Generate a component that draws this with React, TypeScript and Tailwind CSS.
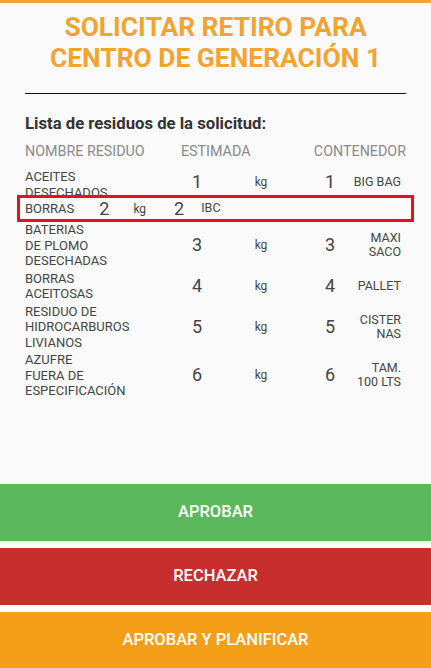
import React from "react";

type Row = {
  name: string[];
  est: string;
  num: string;
  cont: string[];
};

const rows: Row[] = [
  { name: ["BATERIAS", "DE PLOMO", "DESECHADAS"], est: "3", num: "3", cont: ["MAXI", "SACO"] },
  { name: ["BORRAS", "ACEITOSAS"], est: "4", num: "4", cont: ["PALLET"] },
  { name: ["RESIDUO DE", "HIDROCARBUROS", "LIVIANOS"], est: "5", num: "5", cont: ["CISTER", "NAS"] },
  { name: ["AZUFRE", "FUERA DE", "ESPECIFICACIÓN"], est: "6", num: "6", cont: ["TAM.", "100 LTS"] },
];

function TableRow({ r, clip }: { r: Row; clip?: boolean }) {
  return (
    <div className="flex items-center">
      <div
        className={`w-[140px] text-[13px] leading-[15.5px] text-[#444] ${clip ? "h-[26px] overflow-hidden" : ""}`}
      >
        {r.name.map((n) => (
          <div key={n}>{n}</div>
        ))}
      </div>
      <div className="w-[64px] text-center text-[18px] leading-[22px] text-[#444]">{r.est}</div>
      <div className="w-[64px] text-center text-[12px] text-[#444]">kg</div>
      <div className="w-[60px] pl-[14px] text-center text-[18px] leading-[22px] text-[#444]">{r.num}</div>
      <div className="flex-1 pr-[5px] text-right text-[12.5px] leading-[14px] text-[#444]">
        {r.cont.map((c) => (
          <div key={c} className="whitespace-nowrap">
            {c}
          </div>
        ))}
      </div>
    </div>
  );
}

export default function App() {
  return (
    <div
      className="flex h-[668px] w-full flex-col bg-[#fafafa]"
      style={{ fontFamily: "Roboto, 'Noto Sans', sans-serif" }}
    >
      <div className="h-[3px] w-full bg-[#f2a332]" />
      <div className="px-[25px]">
        <h1 className="pt-[8.5px] text-center text-[26.4px] font-bold leading-[31px] text-[#f2a332]">
          SOLICITAR RETIRO PARA
          <br />
          CENTRO DE GENERACIÓN 1
        </h1>
        <div className="mt-[19.5px] h-px w-full bg-[#111]" />
        <div className="mt-[20px] text-[16.7px] font-bold leading-[20px] text-[#333]">
          Lista de residuos de la solicitud:
        </div>
        <div className="mt-[8px] flex text-[14.3px] leading-[18px] text-[#8a8a8a]">
          <div className="w-[156px]">NOMBRE RESIDUO</div>
          <div className="w-[133px]">ESTIMADA</div>
          <div className="flex-1 text-right">CONTENEDOR</div>
        </div>
      </div>
      <div className="mt-[9px] px-[25px]">
        <TableRow clip r={{ name: ["ACEITES", "DESECHADOS"], est: "1", num: "1", cont: ["BIG BAG"] }} />
      </div>
      <div className="mx-[17px] flex h-[27px] items-center border-[3px] border-[#e8101a] pl-[5px] text-[#444]">
        <span className="text-[13px]">BORRAS</span>
        <span className="ml-[25px] text-[18px]">2</span>
        <span className="ml-[24px] text-[12px]">kg</span>
        <span className="ml-[28px] text-[18px]">2</span>
        <span className="ml-[17px] text-[12.5px]">IBC</span>
      </div>
      <div className="flex flex-col gap-[2px] px-[25px]">
        {rows.map((r) => (
          <TableRow key={r.est} r={r} />
        ))}
      </div>
      <div className="mt-auto flex flex-col gap-[7px] bg-[#fdfdfd]">
        <button className="h-[57px] w-full bg-[#5cb85c] text-[16.5px] font-medium text-white">APROBAR</button>
        <button className="h-[57px] w-full bg-[#c92e2e] text-[16.5px] font-medium text-white">RECHAZAR</button>
        <button className="h-[56px] w-full bg-[#f49f17] text-[16.5px] font-medium text-white">
          APROBAR Y PLANIFICAR
        </button>
      </div>
    </div>
  );
}
